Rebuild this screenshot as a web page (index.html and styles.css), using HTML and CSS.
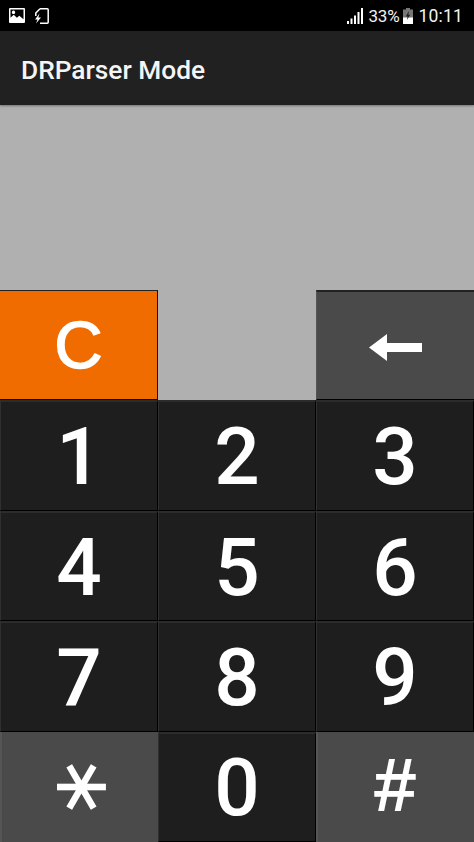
FILE: index.html
```html
<!DOCTYPE html>
<html lang="en">
<head>
<meta charset="utf-8">
<title>DRParser Mode</title>
<link rel="stylesheet" href="styles.css">
</head>
<body>
<div class="phone">
  <div class="status">
    <div class="status-left">
      <svg class="ic-pic" viewBox="0 0 16 15"><path fill="#fff" fill-rule="evenodd" d="M1 0h14a1 1 0 0 1 1 1v13a1 1 0 0 1-1 1H1a1 1 0 0 1-1-1V1a1 1 0 0 1 1-1zM1.500 1.500v8.200l3.200-3 3.200 3 2.400-2 4.200 3.600V1.500zM4.500 2.600a1.700 1.700 0 1 0 .01 0z"/></svg>
      <svg class="ic-file" viewBox="0 0 15 16"><path fill="none" stroke="#fff" stroke-width="1.500" d="M6 .8h7.300a.9.900 0 0 1 .9.900v12.600a.9.900 0 0 1-.9.900H6M6 .8 1.800 5v3"/><path fill="#fff" d="M5.500 5.500 1 11.500h2.500L2 15.500l5-6H4.300z"/></svg>
    </div>
    <div class="status-right">
      <svg class="ic-signal" viewBox="0 0 16 16"><path fill="#fff" d="M0 13h2v3H0zM3.500 10.500h2V16h-2zM7 7.500h2V16H7zM10.500 4h2v12h-2zM14 0h2v16h-2z"/></svg>
      <span class="pct">33%</span>
      <svg class="ic-batt" viewBox="0 0 10 16"><path fill="#777" d="M3 0h4v1.500h3V16H0V1.500h3z"/><path fill="#fff" d="M0 9.500h10V16H0z"/><path fill="#222" d="M5.800 3 2.800 8.500h1.800L4 12l3.200-5.200H5.400z"/></svg>
      <span class="clock">10:11</span>
    </div>
  </div>
  <header class="toolbar">DRParser Mode</header>
  <div class="display"></div>
  <div class="keypad">
    <button class="key key-orange">C</button>
    <div class="key-gap"></div>
    <button class="key key-gray key-back" aria-label="Backspace"><svg class="ic-back" viewBox="0 0 53 27"><path fill="#fff" d="M0 13.500 18 0v9h35v9H18v9z"/></svg></button>
    <button class="key">1</button>
    <button class="key">2</button>
    <button class="key">3</button>
    <button class="key">4</button>
    <button class="key">5</button>
    <button class="key">6</button>
    <button class="key">7</button>
    <button class="key">8</button>
    <button class="key">9</button>
    <button class="key key-gray key-flat key-star"><span class="star">∗</span></button>
    <button class="key">0</button>
    <button class="key key-gray key-flat key-hash">#</button>
  </div>
</div>
</body>
</html>
```
FILE: styles.css
```css
* { box-sizing: border-box; }
html, body { margin: 0; height: 100%; }
body { background: #000; font-family: "Liberation Sans", Arial, sans-serif; }
.phone { width: 474px; height: 842px; display: flex; flex-direction: column; background: #b0b0b0; overflow: hidden; }
.status { height: 31px; flex: none; background: #000; display: flex; justify-content: space-between; align-items: center; padding: 0 11px 0 9px; color: #f2f2f2; font-family: Roboto, sans-serif; }
.status-left { display: flex; align-items: center; gap: 9px; }
.ic-pic { width: 16px; height: 15px; }
.ic-file { width: 15px; height: 16px; }
.status-right { display: flex; align-items: center; }
.ic-signal { width: 16px; height: 16px; margin-right: 5px; }
.pct { font-size: 17px; letter-spacing: -0.2px; }
.ic-batt { width: 10px; height: 16px; margin: 0 5px 0 4px; }
.clock { font-size: 17.5px; letter-spacing: 0.2px; }
.toolbar { height: 74px; flex: none; background: #212121; color: #f5f5f5; font-family: Roboto, sans-serif; font-weight: 500; font-size: 26.3px; line-height: 78px; padding-left: 21px; box-shadow: 0 1px 2px rgba(0,0,0,.35); position: relative; }
.display { flex: 1; }
.keypad { flex: none; display: grid; grid-template-columns: 158px 158px 158px; grid-template-rows: repeat(5, 110.4px); }
.key { margin: 0; padding: 2px 0 0; border: 0; border-top: 2px solid #2c2c2c; border-right: 1px solid #000; border-bottom: 1px solid #000; border-left: 1px solid #303030; background: #1e1e1e; color: #fff; font-family: Roboto, sans-serif; font-weight: 500; font-size: 80px; line-height: 1; display: flex; align-items: center; justify-content: center; overflow: hidden; }
.key-orange { background: #f06c00; border-top: 1px solid #222; border-left: 0; border-right: 1px solid #111; font-family: "Liberation Sans", Arial, sans-serif; font-weight: 400; font-size: 67px; -webkit-text-stroke: 1.4px #fff; padding: 0 0 2px; }
.key-gray { background: #4a4a4a; border-left: 1px solid #555; }
.key-back { border-top: 2px solid #222; border-right: 0; padding: 4px 1px 0 0; }
.key-flat { border: 0; border-left: 2px solid #555; }
.key-star { padding: 0 0 0 8px; }
.key-hash { font-family: "Liberation Sans", Arial, sans-serif; font-weight: 400; font-size: 72px; -webkit-text-stroke: 2px #fff; padding: 0 2px 4px 0; }
.ic-back { width: 53px; height: 27px; }
.star { font-family: "DejaVu Sans", sans-serif; font-weight: 400; font-size: 78px; line-height: 1; display: block; transform: rotate(90deg); }
```
